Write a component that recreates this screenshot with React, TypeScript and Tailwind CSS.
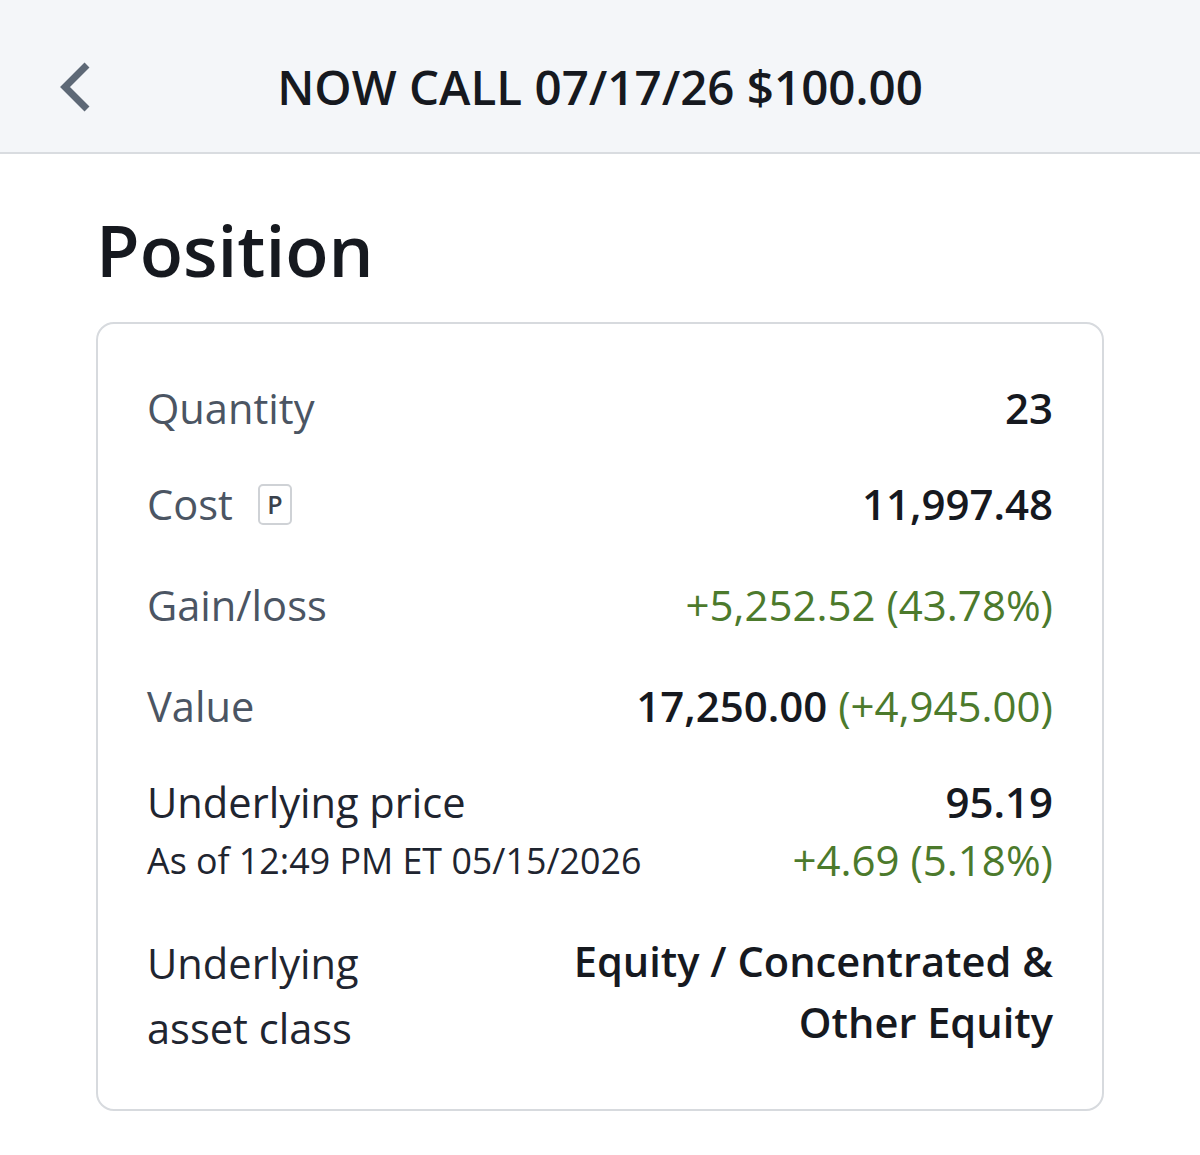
import React from "react";

const font = { fontFamily: '"Open Sans", "Noto Sans", sans-serif' };

function Row({ label, value, mt }: { label: React.ReactNode; value: React.ReactNode; mt: string }) {
  return (
    <div className={`flex items-center justify-between h-[60px] ${mt}`}>
      <div className="text-[41.6px] text-[#4b5563] leading-[60px] flex items-center">{label}</div>
      <div className="text-[42px] font-semibold text-[#16191f] leading-[60px]">{value}</div>
    </div>
  );
}

export default function App() {
  return (
    <div className="w-[1200px] h-[1155px] bg-white overflow-hidden" style={font}>
      <div className="relative h-[154px] bg-[#f4f6f9] border-b-2 border-[#d9dce0] flex items-center justify-center">
        <svg className="absolute left-[55px] top-[60px]" width="40" height="54" viewBox="0 0 40 54">
          <path d="M32 5 L10 27 L32 49" fill="none" stroke="#5d6876" strokeWidth="7" strokeLinecap="butt" strokeLinejoin="miter" />
        </svg>
        <div className="text-[47.5px] font-semibold text-[#16191f] mt-[22px]">NOW CALL 07/17/26 $100.00</div>
      </div>
      <div className="px-[96px]">
        <h1 className="text-[71px] font-semibold text-[#16191f] leading-[90px] mt-[51px]">Position</h1>
        <div className="mt-[27px] border-2 border-[#d7dade] rounded-[18px] px-[49px] pt-[54px] pb-[48px]">
          <Row label="Quantity" value="23" mt="" />
          <Row
            label={
              <>
                <span>Cost</span>
                <span className="ml-[25px] inline-flex items-center justify-center w-[34px] h-[41px] border-2 border-[#cfd2d6] rounded-[5px] text-[25px] font-semibold text-[#3a414c] leading-none">P</span>
              </>
            }
            value="11,997.48"
            mt="mt-[36px]"
          />
          <Row label="Gain/loss" value={<span className="text-[#4c7a2c] font-medium">+5,252.52 (43.78%)</span>} mt="mt-[41px]" />
          <Row
            label="Value"
            value={
              <>
                <span>17,250.00</span> <span className="text-[#4c7a2c] font-medium">(+4,945.00)</span>
              </>
            }
            mt="mt-[41px]"
          />
          <div className="mt-[36px]">
            <div className="flex items-center justify-between h-[60px]">
              <div className="text-[41.6px] text-[#1f2530] leading-[60px]">Underlying price</div>
              <div className="text-[42px] font-semibold text-[#16191f] leading-[60px]">95.19</div>
            </div>
            <div className="flex items-center justify-between h-[56px]">
              <div className="text-[35.8px] text-[#1f2530] leading-[56px]">As of 12:49 PM ET 05/15/2026</div>
              <div className="text-[42px] font-medium text-[#4c7a2c] leading-[56px]">+4.69 (5.18%)</div>
            </div>
          </div>
          <div className="mt-[43px] flex justify-between items-start">
            <div className="text-[41.6px] text-[#1f2530] leading-[65px]">
              Underlying
              <br />
              asset class
            </div>
            <div className="text-[41.6px] font-semibold text-[#16191f] leading-[61px] text-right">
              Equity / Concentrated &amp;
              <br />
              Other Equity
            </div>
          </div>
        </div>
      </div>
    </div>
  );
}
